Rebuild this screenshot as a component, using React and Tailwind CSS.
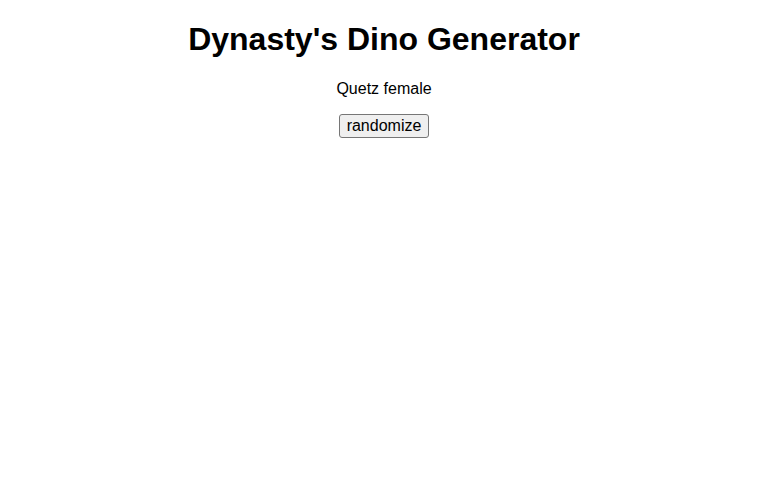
import React, { useState } from "react";

const dinos = ["Quetz", "Rex", "Giga", "Argentavis", "Spino", "Raptor", "Stego", "Trike"];
const sexes = ["male", "female"];

export default function App() {
  const [dino, setDino] = useState("Quetz female");

  const randomize = () => {
    const d = dinos[Math.floor(Math.random() * dinos.length)];
    const s = sexes[Math.floor(Math.random() * sexes.length)];
    setDino(d + " " + s);
  };

  return (
    <div className="text-center text-black bg-white font-['Liberation_Sans',Arial,sans-serif]">
      <h1 className="text-[32px] font-bold leading-[normal] my-[21.44px]">
        Dynasty's Dino Generator
      </h1>
      <p className="text-base leading-[normal] my-4">{dino}</p>
      <div>
        <button
          onClick={randomize}
          className="text-base leading-[normal] px-[7px] py-[2px] border border-[#767676] bg-[#efefef] rounded-[3px] text-black"
        >
          randomize
        </button>
      </div>
    </div>
  );
}
